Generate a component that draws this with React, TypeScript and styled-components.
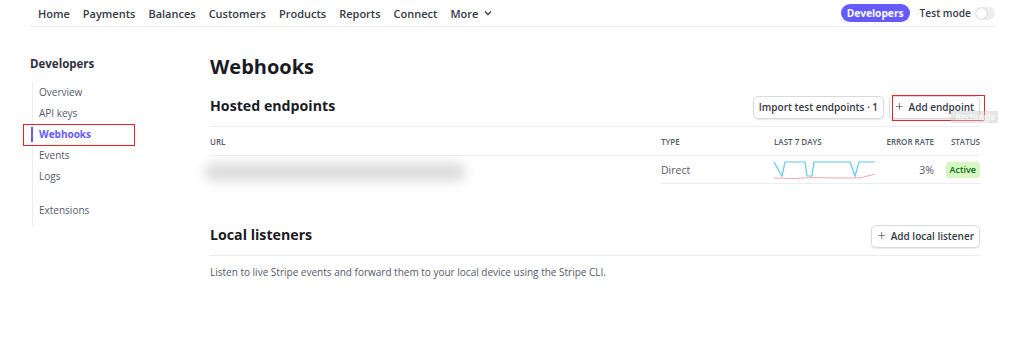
import React from 'react';
import styled, { createGlobalStyle } from 'styled-components';

// Stripe dashboard - Developers / Webhooks page

const GlobalStyle = createGlobalStyle`
  * { box-sizing: border-box; }
  body {
    margin: 0;
    background: #fff;
    font-family: 'Open Sans', 'Noto Sans', sans-serif;
    color: #30313d;
  }
`;

const Page = styled.div`
  width: 1024px;
  height: 350px;
  overflow: hidden;
  position: relative;
`;

const TopNav = styled.nav`
  margin: 0 29px 0 30px;
  height: 27px;
  padding: 0 0 0 8px;
  border-bottom: 1px solid #ebeef1;
  display: flex;
  align-items: center;
  justify-content: space-between;
`;

const NavLinks = styled.div`
  display: flex;
  align-items: center;
  gap: 13px;
`;

const NavLink = styled.span`
  font-size: 11px;
  font-weight: 600;
  color: #353a44;
  display: inline-flex;
  align-items: center;
  gap: 5px;
`;

const NavRight = styled.div`
  display: flex;
  align-items: center;
  gap: 10px;
`;

const DevPill = styled.span`
  background: #635bff;
  color: #fff;
  font-size: 10.2px;
  font-weight: 700;
  height: 18px;
  line-height: 18px;
  padding: 0 6px;
  border-radius: 9px;
`;

const TestMode = styled.span`
  display: flex;
  align-items: center;
  gap: 4px;
  font-size: 10.2px;
  font-weight: 600;
  color: #353a44;
`;

const Toggle = styled.span`
  width: 20px;
  height: 13px;
  border-radius: 7px;
  background: #ebeef1;
  position: relative;
  &::after {
    content: '';
    position: absolute;
    left: 1px;
    top: 1px;
    width: 11px;
    height: 11px;
    border-radius: 50%;
    background: #fff;
    box-shadow: 0 0 1px rgba(0, 0, 0, 0.4);
  }
`;

const Body = styled.div`
  display: flex;
  padding-left: 30px;
`;

const Sidebar = styled.aside`
  width: 180px;
  padding-top: 29px;
`;

const SideTitle = styled.div`
  font-size: 11.5px;
  line-height: 16px;
  font-weight: 700;
  color: #30313d;
  margin-bottom: 10px;
`;

const SideList = styled.div`
  border-left: 1px solid #ebeef1;
  margin-left: 2px;
  padding-bottom: 6px;
  display: flex;
  flex-direction: column;
`;

const SideItem = styled.div<{ $active?: boolean; $gap?: boolean }>`
  position: relative;
  height: 21px;
  line-height: 21px;
  padding-left: 6px;
  margin-top: ${(p) => (p.$gap ? '13px' : '0')};
  font-size: 10px;
  font-weight: ${(p) => (p.$active ? 700 : 400)};
  color: ${(p) => (p.$active ? '#635bff' : '#545969')};
  &::before {
    content: '';
    display: ${(p) => (p.$active ? 'block' : 'none')};
    position: absolute;
    left: -2px;
    top: 3px;
    bottom: 3px;
    width: 2px;
    background: #635bff;
  }
`;

const Highlight = styled.span`
  position: absolute;
  left: -10px;
  top: 0;
  width: 112px;
  height: 22px;
  border: 1.5px solid #e8212b;
`;

const Main = styled.main`
  width: 770px;
  padding-top: 27px;
`;

const PageTitle = styled.h1`
  margin: 0 0 10px;
  font-size: 20px;
  font-weight: 700;
  color: #1a1b25;
  line-height: 26px;
`;

const SectionHead = styled.div`
  display: flex;
  align-items: center;
  justify-content: space-between;
  height: 30px;
  border-bottom: 1px solid #ebeef1;
  padding-bottom: 6px;
  box-sizing: content-box;
`;

const SectionTitle = styled.h2`
  margin: 0;
  font-size: 14.2px;
  font-weight: 700;
  color: #1a1b25;
`;

const Buttons = styled.div`
  display: flex;
  gap: 5px;
  margin-top: 4px;
`;

const Button = styled.button`
  position: relative;
  height: 23px;
  padding: 0 5px;
  border: 1px solid #d5dbe1;
  border-radius: 5px;
  background: #fff;
  box-shadow: 0 1px 1px rgba(64, 68, 82, 0.12);
  font-family: inherit;
  font-size: 10px;
  font-weight: 600;
  color: #353a44;
  display: flex;
  align-items: center;
  gap: 5px;
`;

const Plus = styled.span`
  font-size: 15px;
  font-weight: 300;
  line-height: 1;
  margin-top: -2px;
`;

const RedBox = styled.span`
  position: absolute;
  left: 2px;
  top: -2px;
  right: -6px;
  bottom: -3px;
  border: 1.5px solid #e8212b;
  pointer-events: none;
`;

const GhostLabel = styled.span`
  position: absolute;
  left: 61px;
  top: 14px;
  width: 47px;
  height: 12px;
  background: rgba(205, 205, 205, 0.5);
  color: rgba(255, 255, 255, 0.85);
  font-size: 8.5px;
  font-weight: 600;
  line-height: 12px;
  padding-left: 2px;
  overflow: hidden;
  pointer-events: none;
`;

const Table = styled.div`
  display: grid;
  grid-template-columns: 451px 113px 112px 48px 46px;
`;

const HeadCell = styled.div<{ $right?: boolean }>`
  height: 29px;
  display: flex;
  align-items: center;
  justify-content: ${(p) => (p.$right ? 'flex-end' : 'flex-start')};
  font-size: 8px;
  font-weight: 600;
  color: #545969;
  text-transform: uppercase;
  border-bottom: 1px solid #ebeef1;
`;

const Cell = styled.div<{ $right?: boolean }>`
  height: 28px;
  display: flex;
  align-items: center;
  justify-content: ${(p) => (p.$right ? 'flex-end' : 'flex-start')};
  font-size: 10.5px;
  color: #545969;
  border-bottom: 1px solid #ebeef1;
`;

const UrlCell = styled(Cell)`
  border-bottom-color: transparent;
`;

const BlurredUrl = styled.div`
  width: 262px;
  height: 18px;
  margin: 4px 0 0 -6px;
  background: #dcdcdc;
  border-radius: 9px;
  filter: blur(6px);
`;

const Badge = styled.span`
  background: #d7f7c2;
  color: #05690d;
  font-size: 9px;
  font-weight: 600;
  padding: 1px 4px 2px;
  border-radius: 3px;
`;

const LocalSection = styled.section`
  margin-top: 35px;
`;

const Description = styled.p`
  margin: 9px 0 0;
  font-size: 10px;
  color: #545969;
`;

const Sparkline: React.FC = () => (
  <svg width="101" height="22" viewBox="0 0 101 22">
    <polyline
      fill="none"
      stroke="#f4a7ae"
      strokeWidth="1"
      points="0,19 20,19.5 40,18.5 60,19 80,19 88,18.5 101,15"
    />
    <polyline
      fill="none"
      stroke="#5ccaf2"
      strokeWidth="1.2"
      points="0,3 8,17 11,3 31,3 33,17 38,17 40,3 76,3 81,17 85,3 101,3"
    />
  </svg>
);

const Chevron: React.FC = () => (
  <svg width="10" height="10" viewBox="0 0 10 10">
    <path d="M2 3.5 L5 6.5 L8 3.5" fill="none" stroke="#353a44" strokeWidth="1.3" />
  </svg>
);

const navLinks = ['Home', 'Payments', 'Balances', 'Customers', 'Products', 'Reports', 'Connect'];

export default function App() {
  return (
    <Page>
      <GlobalStyle />
      <TopNav>
        <NavLinks>
          {navLinks.map((l) => (
            <NavLink key={l}>{l}</NavLink>
          ))}
          <NavLink>
            More <Chevron />
          </NavLink>
        </NavLinks>
        <NavRight>
          <DevPill>Developers</DevPill>
          <TestMode>
            Test mode <Toggle />
          </TestMode>
        </NavRight>
      </TopNav>

      <Body>
        <Sidebar>
          <SideTitle>Developers</SideTitle>
          <SideList>
            <SideItem>Overview</SideItem>
            <SideItem>API keys</SideItem>
            <SideItem $active>
              Webhooks
              <Highlight />
            </SideItem>
            <SideItem>Events</SideItem>
            <SideItem>Logs</SideItem>
            <SideItem $gap>Extensions</SideItem>
          </SideList>
        </Sidebar>

        <Main>
          <PageTitle>Webhooks</PageTitle>
          <SectionHead>
            <SectionTitle>Hosted endpoints</SectionTitle>
            <Buttons>
              <Button>Import test endpoints · 1</Button>
              <Button>
                <Plus>+</Plus> Add endpoint
                <RedBox />
                <GhostLabel>Rectangle</GhostLabel>
              </Button>
            </Buttons>
          </SectionHead>

          <Table>
            <HeadCell>URL</HeadCell>
            <HeadCell>Type</HeadCell>
            <HeadCell>Last 7 days</HeadCell>
            <HeadCell $right>Error rate</HeadCell>
            <HeadCell $right>Status</HeadCell>

            <UrlCell>
              <BlurredUrl />
            </UrlCell>
            <Cell>Direct</Cell>
            <Cell>
              <Sparkline />
            </Cell>
            <Cell $right>3%</Cell>
            <Cell $right>
              <Badge>Active</Badge>
            </Cell>
          </Table>

          <LocalSection>
            <SectionHead>
              <SectionTitle>Local listeners</SectionTitle>
              <Buttons>
                <Button>
                  <Plus>+</Plus> Add local listener
                </Button>
              </Buttons>
            </SectionHead>
            <Description>
              Listen to live Stripe events and forward them to your local device using the Stripe CLI.
            </Description>
          </LocalSection>
        </Main>
      </Body>
    </Page>
  );
}
